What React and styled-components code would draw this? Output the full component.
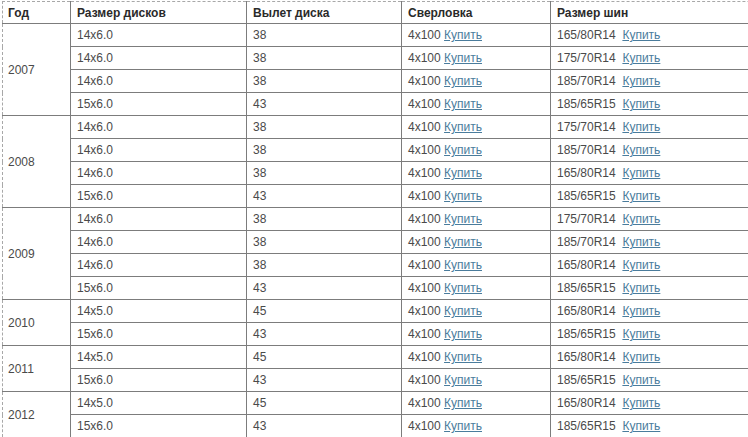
import React from "react";
import styled, { createGlobalStyle } from "styled-components";

const GlobalStyle = createGlobalStyle`
  html, body {
    margin: 0;
    padding: 0;
    background: #fff;
  }
  body {
    font-family: "Liberation Sans", Arial, sans-serif;
  }
`;

const data = [
  {
    year: "2007",
    rows: [
      ["14x6.0", "38", "4x100", "165/80R14"],
      ["14x6.0", "38", "4x100", "175/70R14"],
      ["14x6.0", "38", "4x100", "185/70R14"],
      ["15x6.0", "43", "4x100", "185/65R15"],
    ],
  },
  {
    year: "2008",
    rows: [
      ["14x6.0", "38", "4x100", "175/70R14"],
      ["14x6.0", "38", "4x100", "185/70R14"],
      ["14x6.0", "38", "4x100", "165/80R14"],
      ["15x6.0", "43", "4x100", "185/65R15"],
    ],
  },
  {
    year: "2009",
    rows: [
      ["14x6.0", "38", "4x100", "175/70R14"],
      ["14x6.0", "38", "4x100", "185/70R14"],
      ["14x6.0", "38", "4x100", "165/80R14"],
      ["15x6.0", "43", "4x100", "185/65R15"],
    ],
  },
  {
    year: "2010",
    rows: [
      ["14x5.0", "45", "4x100", "165/80R14"],
      ["15x6.0", "43", "4x100", "185/65R15"],
    ],
  },
  {
    year: "2011",
    rows: [
      ["14x5.0", "45", "4x100", "165/80R14"],
      ["15x6.0", "43", "4x100", "185/65R15"],
    ],
  },
  {
    year: "2012",
    rows: [
      ["14x5.0", "45", "4x100", "165/80R14"],
      ["15x6.0", "43", "4x100", "185/65R15"],
    ],
  },
];

// the table runs on past the right edge of the window, so clip it
const Viewport = styled.div`
  width: 748px;
  height: 437px;
  overflow: hidden;
`;

const Table = styled.table`
  margin: 1px 0 0 2px;
  width: 820px;
  table-layout: fixed;
  border-collapse: collapse;
  border: 1px dashed #a8a8a8;
  font-size: 12px;
`;

const Head = styled.th`
  height: 21px;
  padding: 0 6px;
  text-align: left;
  font-weight: bold;
  color: #2a2a2a;
  border: 1px solid #7c7c7c;
  border-top: none;
  ${(p) => p.$first && "border-left: none; padding-left: 5px;"}
`;

const Cell = styled.td`
  height: 22px;
  padding: 0 6px;
  color: #4a4a4a;
  white-space: nowrap;
  border: 1px solid #7c7c7c;
`;

const YearCell = styled(Cell)`
  border-left: none;
  padding-left: 5px;
  vertical-align: middle;
`;

const Buy = styled.a`
  color: #4a7c9c;
  text-decoration: underline;
  cursor: pointer;
`;

export default function App() {
  return (
    <Viewport>
      <GlobalStyle />
      <Table>
        <colgroup>
          <col style={{ width: 68 }} />
          <col style={{ width: 176 }} />
          <col style={{ width: 155 }} />
          <col style={{ width: 149 }} />
          <col />
        </colgroup>
        <thead>
          <tr>
            <Head $first>Год</Head>
            <Head>Размер дисков</Head>
            <Head>Вылет диска</Head>
            <Head>Сверловка</Head>
            <Head>Размер шин</Head>
          </tr>
        </thead>
        <tbody>
          {data.map((group) =>
            group.rows.map((r, i) => (
              <tr key={group.year + i}>
                {i === 0 && (
                  <YearCell rowSpan={group.rows.length}>{group.year}</YearCell>
                )}
                <Cell>{r[0]}</Cell>
                <Cell>{r[1]}</Cell>
                <Cell>
                  {r[2]} <Buy>Купить</Buy>
                </Cell>
                <Cell>
                  {r[3]}&nbsp; <Buy>Купить</Buy>
                </Cell>
              </tr>
            ))
          )}
        </tbody>
      </Table>
    </Viewport>
  );
}
